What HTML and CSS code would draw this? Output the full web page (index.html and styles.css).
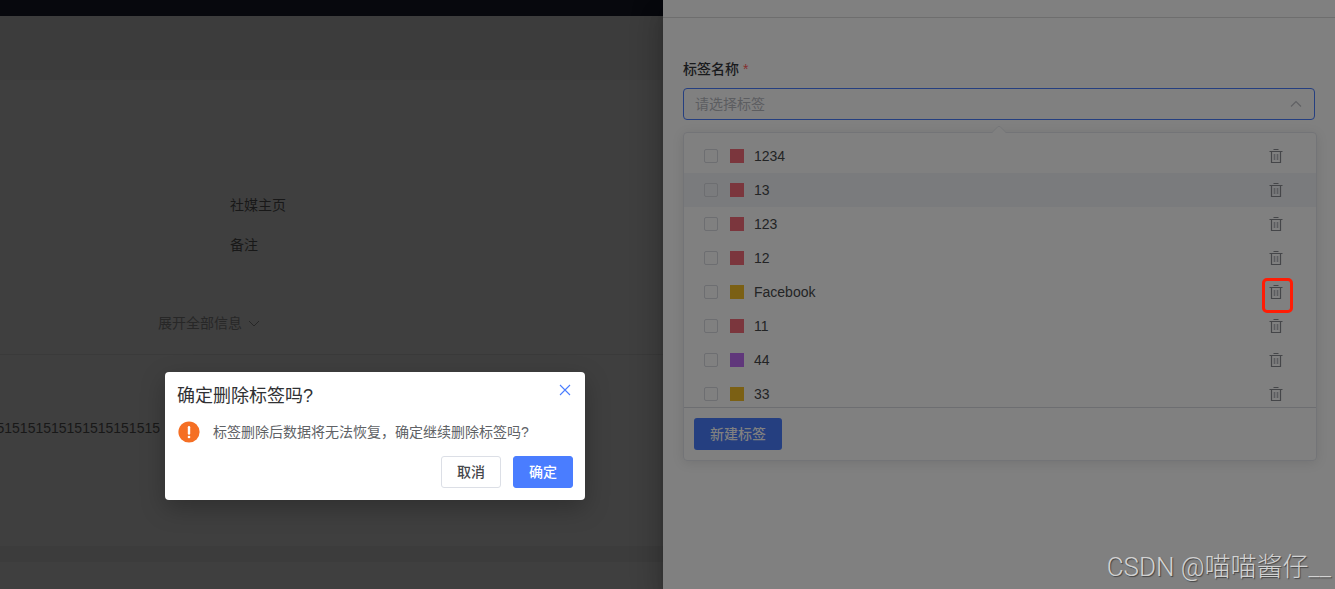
FILE: index.html
```html
<!DOCTYPE html>
<html lang="zh-CN">
<head>
<meta charset="utf-8">
<title>标签</title>
<link rel="stylesheet" href="styles.css">
</head>
<body>
<svg class="sprite" aria-hidden="true">
  <symbol id="trash" viewBox="0 0 14 16">
    <path d="M.5 3.500h13M4.500 1.500h5M2.500 3.500v11h9v-11" fill="none" stroke="#454649" stroke-width="1.2"/>
    <path d="M5.500 6v6M8.500 6v6" stroke="#5c5d60" stroke-width="1.6"/>
  </symbol>
</svg>
<div class="app">
  <main class="page">
    <div class="topbar"></div>
    <div class="band"></div>
    <section class="card details">
      <p class="field">社媒主页</p>
      <p class="field">备注</p>
      <button class="expand" type="button">展开全部信息
        <svg width="12" height="12" viewBox="0 0 12 12"><path d="M1 4l5 5 5-5" fill="none" stroke="currentColor"/></svg>
      </button>
    </section>
    <section class="card record"><p class="digits">515151515151515151515</p></section>
    <section class="card tail"></section>
  </main>

  <aside class="drawer">
    <div class="drawer-head"></div>
    <div class="form">
      <label class="label" for="tag">标签名称 <span class="required">*</span></label>
      <div class="select">
        <input id="tag" type="text" placeholder="请选择标签" readonly>
        <svg width="12" height="12" viewBox="0 0 12 12"><path d="M1 8.500l5-5 5 5" fill="none" stroke="#5f6063" stroke-width="1.1"/></svg>
      </div>
      <div class="dropdown">
        <svg class="arrow" width="14" height="7" viewBox="0 0 14 7"><path d="M0 7L6 1h2l6 6z" fill="#808080"/><path d="M0 6.500L6 .5h2l6 6" fill="none" stroke="#757678"/></svg>
        <ul class="list">
          <li class="row"><label><input type="checkbox"><i class="swatch red"></i>1234</label><button class="del" type="button" aria-label="删除"><svg><use href="#trash"/></svg></button></li>
          <li class="row active"><label><input type="checkbox"><i class="swatch red"></i>13</label><button class="del" type="button" aria-label="删除"><svg><use href="#trash"/></svg></button></li>
          <li class="row"><label><input type="checkbox"><i class="swatch red"></i>123</label><button class="del" type="button" aria-label="删除"><svg><use href="#trash"/></svg></button></li>
          <li class="row"><label><input type="checkbox"><i class="swatch red"></i>12</label><button class="del" type="button" aria-label="删除"><svg><use href="#trash"/></svg></button></li>
          <li class="row"><label><input type="checkbox"><i class="swatch gold"></i>Facebook</label><button class="del marked" type="button" aria-label="删除"><svg><use href="#trash"/></svg></button></li>
          <li class="row"><label><input type="checkbox"><i class="swatch red"></i>11</label><button class="del" type="button" aria-label="删除"><svg><use href="#trash"/></svg></button></li>
          <li class="row"><label><input type="checkbox"><i class="swatch purple"></i>44</label><button class="del" type="button" aria-label="删除"><svg><use href="#trash"/></svg></button></li>
          <li class="row"><label><input type="checkbox"><i class="swatch gold"></i>33</label><button class="del" type="button" aria-label="删除"><svg><use href="#trash"/></svg></button></li>
        </ul>
        <div class="dropdown-foot"><button class="create" type="button">新建标签</button></div>
      </div>
    </div>
  </aside>
</div>

<div class="dialog" role="dialog" aria-labelledby="dialog-title">
  <div class="dialog-head">
    <h2 id="dialog-title">确定删除标签吗?</h2>
    <button class="close" type="button" aria-label="关闭"><svg width="12" height="12" viewBox="0 0 12 12"><path d="M1 1l10 10M11 1L1 11" stroke="#4a7dff" stroke-width="1.1"/></svg></button>
  </div>
  <div class="message">
    <svg width="22" height="22" viewBox="0 0 22 22"><circle cx="11" cy="11" r="10.600" fill="#f56f24"/><path d="M11 6.300v6.200" stroke="#fff" stroke-width="2.400" stroke-linecap="round"/><circle cx="11" cy="16" r="1.300" fill="#fff"/></svg>
    <p>标签删除后数据将无法恢复，确定继续删除标签吗?</p>
  </div>
  <div class="actions">
    <button class="btn" type="button">取消</button>
    <button class="btn primary" type="button">确定</button>
  </div>
</div>
<div class="watermark">CSDN @喵喵酱仔__</div>
</body>
</html>
```
FILE: styles.css
```css
*, *::before, *::after { box-sizing: border-box; }
body {
  margin: 0;
  min-height: 100vh;
  position: relative;
  overflow: hidden;
  background: #3f3f3f;
  font: 14px/20px "Liberation Sans", "Noto Sans CJK SC", sans-serif;
}
button, input { font: inherit; }
button { padding: 0; border: 0; background: none; }
p, h2, ul { margin: 0; padding: 0; }
svg { display: block; flex: none; }
.sprite { position: absolute; width: 0; height: 0; }

.app {
  display: grid;
  grid-template-columns: minmax(0, 663fr) minmax(0, 672fr);
  min-height: 100vh;
}
.page { display: flex; flex-direction: column; background: #3c3c3c; color: #181818; }
.topbar { height: 16px; background: #07080d; }
.band { height: 64px; }
.card { background: #3f3f3f; }
.details { padding: 115px 0 21px 230px; border-bottom: 1px solid #3a3a3a; }
.field { margin-bottom: 20px; }
.expand {
  display: flex;
  align-items: center;
  gap: 6px;
  margin: 58px 0 0 -72px;
  color: #272727;
}
.record { padding: 63px 0 108px; margin-bottom: 16px; }
.digits { display: flex; justify-content: flex-end; width: 160px; }
.tail { flex: 1; }

.drawer {
  position: relative;
  background: #808080;
  box-shadow: 0 8px 10px -5px rgba(0, 0, 0, .2), 0 16px 24px 2px rgba(0, 0, 0, .14), 0 6px 30px 5px rgba(0, 0, 0, .12);
}
.drawer-head { height: 18px; border-bottom: 1px solid #6e6e6e; }
.form { padding: 41px 18px 0 20px; }
.label { display: block; color: #191a1c; font-weight: 500; }
.required { color: #852f2f; }
.select {
  display: flex;
  align-items: center;
  height: 32px;
  margin: 9px 2px 12px 0;
  padding: 0 12px 0 11px;
  border: 1px solid #253f80;
  border-radius: 4px;
}
.select input {
  flex: 1;
  min-width: 0;
  padding: 0;
  border: 0;
  outline: 0;
  background: none;
}
.select input::placeholder { color: #5c5d60; opacity: 1; }

.dropdown {
  position: relative;
  border: 1px solid #737477;
  border-radius: 4px;
  box-shadow: 0 2px 12px rgba(0, 0, 0, .1);
}
.arrow { position: absolute; top: -7px; left: calc(50% - 8px); }
.list { height: 274px; padding-top: 6px; overflow: hidden; list-style: none; }
.row {
  display: flex;
  align-items: center;
  justify-content: space-between;
  height: 34px;
  padding: 0 33px 0 20px;
  color: #232425;
}
.row.active { background: #7a7b7d; }
.row label { display: flex; align-items: center; }
.row input {
  appearance: none;
  width: 14px;
  height: 14px;
  margin: 0 12px 0 0;
  border: 1px solid #6d6e71;
  border-radius: 2px;
}
.swatch { width: 14px; height: 14px; margin-right: 10px; }
.red { background: #7b363d; }
.gold { background: #7b6014; }
.purple { background: #60377b; }
.del { position: relative; }
.del svg { width: 14px; height: 16px; }
.marked::after {
  content: "";
  position: absolute;
  top: -6px;
  left: -7px;
  width: 31px;
  height: 35px;
  border: 3px solid #ff1c05;
  border-radius: 5px;
}
.dropdown-foot { padding: 10px; border-top: 1px solid #6d6e71; }
.create {
  display: block;
  height: 32px;
  padding: 0 16px;
  border-radius: 3px;
  background: #253f80;
  color: #808080;
  font-weight: 500;
}

.dialog {
  position: absolute;
  top: 372px;
  left: 165px;
  width: 420px;
  padding: 12px;
  border-radius: 4px;
  background: #fff;
  box-shadow: 0 8px 24px rgba(0, 0, 0, .25);
}
.dialog-head { display: flex; justify-content: space-between; }
.dialog h2 { color: #303133; font-size: 18px; font-weight: 400; line-height: 24px; }
.close { width: 12px; height: 12px; margin-right: 2px; }
.message { display: flex; align-items: center; gap: 13px; margin: 13px 1px; color: #606266; }
.actions { display: flex; justify-content: flex-end; gap: 12px; }
.btn {
  width: 60px;
  height: 32px;
  border: 1px solid #dcdfe6;
  border-radius: 3px;
  background: #fff;
  color: #45474b;
  font-weight: 500;
}
.btn.primary { border-color: #4a7dff; background: #4a7dff; color: #fff; }

.watermark {
  position: absolute;
  right: 4px;
  bottom: 6px;
  color: #d2d2d2;
  font-family: Roboto, "Noto Sans CJK SC", sans-serif;
  font-size: 26px;
  font-weight: 300;
  line-height: 32px;
  text-shadow: 1px 1px 1px #444;
}
```
